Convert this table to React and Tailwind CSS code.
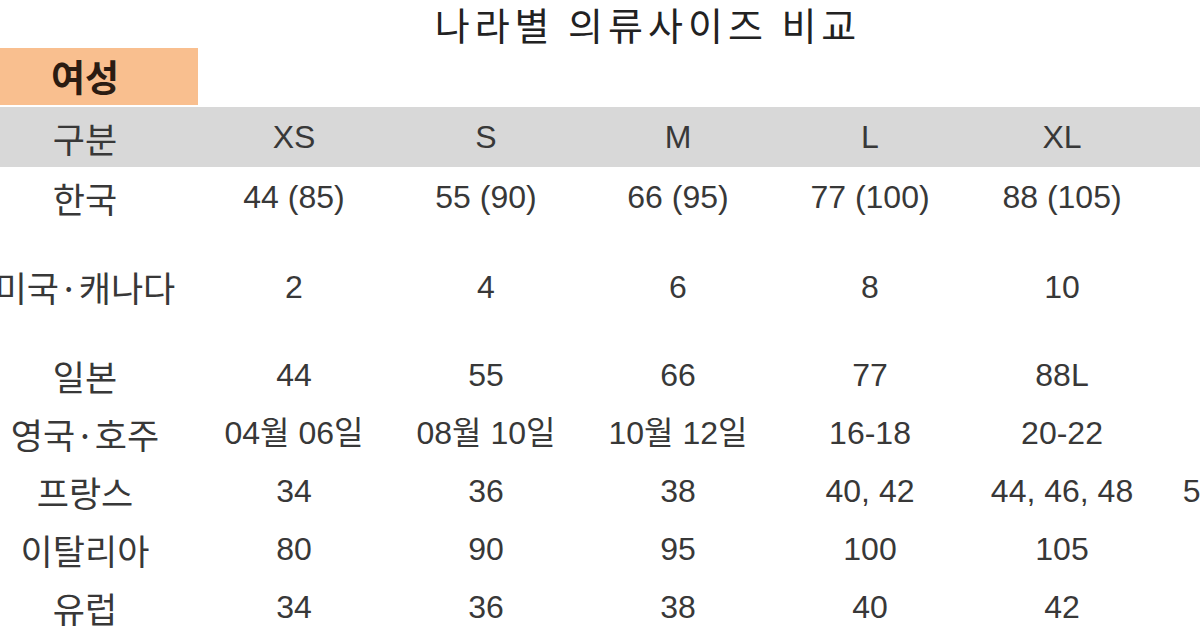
const sizes = ["XS", "S", "M", "L", "XL", ""];

const rows = [
  { label: "한국", h: "h-[60px]", values: ["44 (85)", "55 (90)", "66 (95)", "77 (100)", "88 (105)", ""] },
  { label: "미국·캐나다", h: "h-[119px]", values: ["2", "4", "6", "8", "10", ""] },
  { label: "일본", h: "h-[58px]", values: ["44", "55", "66", "77", "88L", ""] },
  { label: "영국·호주", h: "h-[58px]", values: ["04월 06일", "08월 10일", "10월 12일", "16-18", "20-22", ""] },
  { label: "프랑스", h: "h-[58px]", values: ["34", "36", "38", "40, 42", "44, 46, 48", "50, 52, 54"] },
  { label: "이탈리아", h: "h-[58px]", values: ["80", "90", "95", "100", "105", ""] },
  { label: "유럽", h: "h-[58px]", values: ["34", "36", "38", "40", "42", ""] },
];

const font = "font-['Liberation_Sans','Noto_Sans_CJK_KR',sans-serif]";

function Row({ label, values, h, className = "" }) {
  return (
    <div className={`grid grid-cols-[226px_repeat(6,192px)] items-center ${h} ${className}`}>
      <div className="text-center whitespace-nowrap text-[35px] font-['Noto_Sans_CJK_KR',sans-serif]">{label}</div>
      {values.map((v, i) => (
        <div key={i} className="text-center whitespace-nowrap">
          {v}
        </div>
      ))}
    </div>
  );
}

export default function App() {
  return (
    <div className={`w-[1200px] h-[630px] overflow-hidden bg-white text-[32px] leading-none text-[#383838] ${font}`}>
      {/* title */}
      <div className="h-[48px] flex items-center justify-center pl-[96px]">
        <h1 className="text-[38px] tracking-[5px] text-[#222] font-['Noto_Sans_CJK_KR',sans-serif]">
          나라별 의류사이즈 비교
        </h1>
      </div>

      <div className="ml-[-28px] w-[1378px]">
        {/* gender tab */}
        <div className="grid grid-cols-[226px_1fr] h-[57px]">
          <div className="bg-[#f9bf8f] flex items-center justify-center font-['Noto_Sans_CJK_KR',sans-serif] font-bold text-[#2b1c12] text-[37px]">
            여성
          </div>
          <div />
        </div>

        <div className="h-[2px]" />

        {/* header */}
        <Row label="구분" values={sizes} h="h-[60px]" className="bg-[#d8d8d8]" />

        {rows.map((r) => (
          <Row key={r.label} {...r} />
        ))}
      </div>
    </div>
  );
}
